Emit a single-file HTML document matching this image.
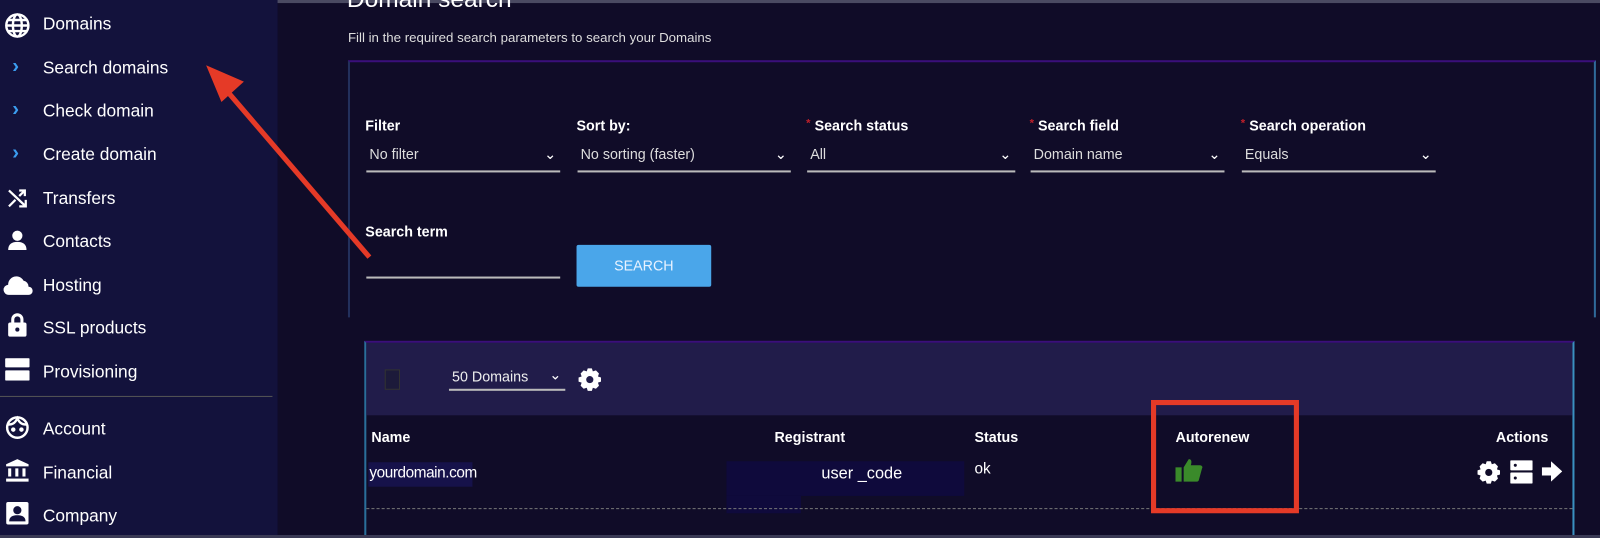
<!DOCTYPE html>
<html><head><style>
*{margin:0;padding:0;box-sizing:border-box}
html,body{width:1600px;height:538px;overflow:hidden}
body{background:#100c28;font-family:"Liberation Sans",sans-serif;color:#fff;position:relative}
#wrap{position:absolute;left:0;top:0;width:1568px;height:528px;transform:scale(1.0204);transform-origin:0 0}
.abs{position:absolute}
#side{left:0;top:0;width:272px;height:538px;background:#13123c}
.item{position:absolute;left:42px;font-size:17px;color:#fff}
.ic{position:absolute;left:4px}
.chev{position:absolute;left:12px;color:#3b9df0;font-size:20px;font-weight:bold}
.lbl{position:absolute;font-size:14px;font-weight:bold}
.star{color:#c0202a;font-size:11px;vertical-align:top;margin-right:4px}
.sel{position:absolute;height:1px;border-bottom:2px solid #bbb;font-size:14px}
.sel span{position:absolute;left:3px;top:-24px;color:#ddd;white-space:nowrap}
.sel i{position:absolute;right:4px;top:-24px;font-style:normal}
.th{position:absolute;top:420px;font-size:14px;font-weight:bold}
</style></head><body><div id="wrap">
<div class="abs" style="left:0;top:0;width:1600px;height:3px;background:#4a4a62"></div>
<div id="side" class="abs">
 <div class="item" style="top:14px">Domains</div>
 <svg class="ic" style="top:12px" width="26" height="26" viewBox="0 0 24 24" fill="none" stroke="#fff" stroke-width="2.2"><circle cx="12" cy="12" r="10"/><ellipse cx="12" cy="12" rx="4" ry="10"/><path d="M2 12h20M4 7h16M4 17h16"/></svg>
 <div class="chev" style="top:54px">›</div><div class="item" style="top:57px">Search domains</div>
 <div class="chev" style="top:96px">›</div><div class="item" style="top:99px">Check domain</div>
 <div class="chev" style="top:139px">›</div><div class="item" style="top:142px">Create domain</div>
 <svg class="ic" style="top:183px;left:6px" width="22" height="22" viewBox="0 0 24 24" fill="none" stroke="#fff" stroke-width="2.4"><path d="M3 4l18 17M14 21h7v-7M3 21L10 14M14 10l6-6M14 4h6v6"/></svg>
 <div class="item" style="top:185px">Transfers</div>
 <svg class="ic" style="top:225px;left:7px" width="20" height="20" viewBox="0 0 20 20" fill="#fff"><circle cx="10" cy="6" r="5"/><path d="M1 20c0-6 4-8 9-8s9 2 9 8z"/></svg>
 <div class="item" style="top:227px">Contacts</div>
 <svg class="ic" style="top:268px;left:3px" width="30" height="22" viewBox="0 0 30 22" fill="#fff"><path d="M6 21a5 5 0 0 1-1-10 8 8 0 0 1 15-4 6 6 0 0 1 5 6 4 4 0 0 1 0 8z"/></svg>
 <div class="item" style="top:270px">Hosting</div>
 <svg class="ic" style="top:306px;left:7px" width="20" height="24" viewBox="0 0 20 24" fill="#fff"><path d="M4 10V7a6 6 0 0 1 12 0v3h-3V7a3 3 0 0 0-6 0v3z"/><rect x="1" y="10" width="18" height="14" rx="2"/><circle cx="10" cy="17" r="2" fill="#13123c"/></svg>
 <div class="item" style="top:312px">SSL products</div>
 <svg class="ic" style="top:351px;left:5px" width="24" height="22" viewBox="0 0 24 22" fill="#fff"><rect x="0" y="0" width="24" height="9" rx="1"/><rect x="0" y="12" width="24" height="10" rx="1"/></svg>
 <div class="item" style="top:355px">Provisioning</div>
 <div class="abs" style="left:0;top:388px;width:267px;height:1px;background:#555"></div>
 <svg class="ic" style="top:407px;left:5px" width="24" height="24" viewBox="0 0 24 24" fill="none" stroke="#fff" stroke-width="2.4"><circle cx="12" cy="12" r="10"/><circle cx="8" cy="14" r="1" fill="#fff"/><circle cx="16" cy="14" r="1" fill="#fff"/><path d="M3 9c5 0 7-2 9-6 2 4 4 6 9 6"/></svg>
 <div class="item" style="top:411px">Account</div>
 <svg class="ic" style="top:449px;left:5px" width="24" height="24" viewBox="0 0 24 24" fill="#fff"><path d="M12 1l11 5v2H1V6z"/><rect x="3" y="10" width="3" height="8"/><rect x="10" y="10" width="3" height="8"/><rect x="17" y="10" width="3" height="8"/><rect x="1" y="20" width="22" height="3"/></svg>
 <div class="item" style="top:454px">Financial</div>
 <svg class="ic" style="top:492px;left:6px" width="22" height="22" viewBox="0 0 22 22" fill="#fff"><rect width="22" height="22" rx="2"/><circle cx="11" cy="8" r="4" fill="#13123c"/><path d="M3 19c0-5 4-6 8-6s8 1 8 6z" fill="#13123c"/></svg>
 <div class="item" style="top:496px">Company</div>
</div>
<div class="abs" style="left:340px;top:-14px;font-size:24px">Domain search</div>
<div class="abs" style="left:341px;top:29px;font-size:13px;color:#ddd">Fill in the required search parameters to search your Domains</div>
<div class="abs" style="left:341px;top:59px;width:1223px;height:252px;border-top:2px solid #3a0f7a;border-left:2px solid #23305c;border-right:2px solid #2f6a9a"></div>
<div class="lbl" style="left:358px;top:115px">Filter</div>
<div class="lbl" style="left:565px;top:115px">Sort by:</div>
<div class="lbl" style="left:790px;top:115px"><span class="star">*</span>Search status</div>
<div class="lbl" style="left:1009px;top:115px"><span class="star">*</span>Search field</div>
<div class="lbl" style="left:1216px;top:115px"><span class="star">*</span>Search operation</div>
<div class="sel" style="left:359px;top:167px;width:190px"><span>No filter</span><i>⌄</i></div>
<div class="sel" style="left:566px;top:167px;width:209px"><span>No sorting (faster)</span><i>⌄</i></div>
<div class="sel" style="left:791px;top:167px;width:204px"><span>All</span><i>⌄</i></div>
<div class="sel" style="left:1010px;top:167px;width:190px"><span>Domain name</span><i>⌄</i></div>
<div class="sel" style="left:1217px;top:167px;width:190px"><span>Equals</span><i>⌄</i></div>
<div class="lbl" style="left:358px;top:219px">Search term</div>
<div class="sel" style="left:359px;top:271px;width:190px"></div>
<div class="abs" style="left:565px;top:240px;width:132px;height:41px;background:#4aa6ea;border-radius:2px;text-align:center;line-height:41px;font-size:14px;color:#e8f2ff">SEARCH</div>
<div class="abs" style="left:357px;top:334px;width:1186px;height:204px;border-top:2px solid #3a0f7a;border-left:2px solid #2a6f9a;border-right:2px solid #3a90c0"></div>
<div class="abs" style="left:359px;top:336px;width:1182px;height:71px;background:#211c4a"></div>
<div class="abs" style="left:377px;top:362px;width:15px;height:20px;border:1px solid #333;background:#1c1a3a"></div>
<div class="sel" style="left:440px;top:381px;width:114px"><span style="left:3px;top:-20px;color:#eee">50 Domains</span><i style="top:-22px">⌄</i></div>
<svg class="abs" style="left:566px;top:360px" width="24" height="24" viewBox="0 0 24 24" fill="#fff"><path d="M10 1h4l1 3 3-1 3 3-1 3 3 1v4l-3 1 1 3-3 3-3-1-1 3h-4l-1-3-3 1-3-3 1-3-3-1v-4l3-1-1-3 3-3 3 1z"/><circle cx="12" cy="12" r="3.5" fill="#211c4a"/></svg>
<div class="th" style="left:364px">Name</div>
<div class="th" style="left:759px">Registrant</div>
<div class="th" style="left:955px">Status</div>
<div class="th" style="left:1152px">Autorenew</div>
<div class="th" style="left:1466px">Actions</div>
<div class="abs" style="left:361px;top:453px;width:102px;height:24px;background:#16124a"></div>
<div class="abs" style="left:362px;top:455px;font-size:15px;letter-spacing:-0.4px">yourdomain.com</div>
<div class="abs" style="left:712px;top:452px;width:233px;height:34px;background:#0f0a3c"></div>
<div class="abs" style="left:712px;top:486px;width:73px;height:17px;background:#0f0a3c"></div>
<div class="abs" style="left:805px;top:456px;font-size:16px">user _code</div>
<div class="abs" style="left:955px;top:451px;font-size:15px">ok</div>
<svg class="abs" style="left:1152px;top:449px" width="28" height="24" viewBox="0 0 28 24" fill="#3a8a2a"><rect x="0" y="9" width="6" height="14"/><path d="M8 9l5-8c3 0 3 3 2 6h9c2 0 3 2 2 3l-3 11c0 1-1 2-2 2H8z"/></svg>
<svg class="abs" style="left:1447px;top:451px" width="24" height="24" viewBox="0 0 24 24" fill="#fff"><path d="M10 1h4l1 3 3-1 3 3-1 3 3 1v4l-3 1 1 3-3 3-3-1-1 3h-4l-1-3-3 1-3-3 1-3-3-1v-4l3-1-1-3 3-3 3 1z"/><circle cx="12" cy="12" r="3.5" fill="#100c28"/></svg>
<svg class="abs" style="left:1480px;top:451px" width="22" height="23" viewBox="0 0 22 23" fill="#fff"><rect width="22" height="10" rx="1"/><rect y="12" width="22" height="11" rx="1"/><circle cx="5" cy="5" r="1.5" fill="#100c28"/><circle cx="5" cy="17.5" r="1.5" fill="#100c28"/></svg>
<svg class="abs" style="left:1511px;top:452px" width="20" height="20" viewBox="0 0 20 20" fill="#fff"><path d="M0 6h9V0l11 10-11 10v-6H0z"/></svg>
<div class="abs" style="left:359px;top:498px;width:1182px;height:1px;border-top:1px dashed #777"></div>
<div class="abs" style="left:1128px;top:392px;width:145px;height:111px;border:5px solid #e53a27"></div>
<svg class="abs" style="left:0;top:0" width="400" height="300"><line x1="362" y1="252" x2="218" y2="84" stroke="#e53a27" stroke-width="5"/><path d="M202 64l37 16-22 20z" fill="#e53a27"/></svg>
</div>
<div class="abs" style="left:0;top:535px;width:1600px;height:3px;background:#3a3a55"></div>
</body></html>
